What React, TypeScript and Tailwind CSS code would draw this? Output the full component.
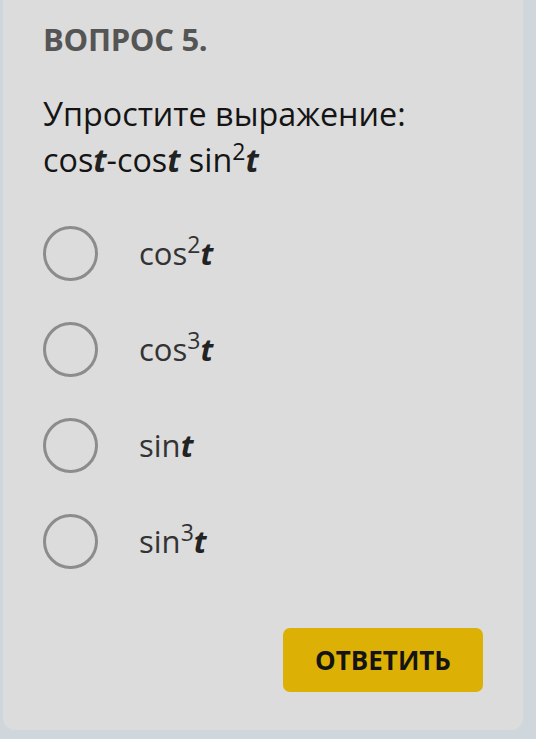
const options = [
  { base: 'cos', sup: '2' },
  { base: 'cos', sup: '3' },
  { base: 'sin', sup: '' },
  { base: 'sin', sup: '3' },
];

const T = () => <span className="font-bold italic text-[#222222]">t</span>;

export default function App() {
  return (
    <div
      className="w-[536px] h-[739px] bg-[#cfd7dc] pl-[3px] pr-[13px] pb-[9px] flex"
      style={{ fontFamily: '"Open Sans", "Liberation Sans", sans-serif' }}
    >
      <div className="flex-1 bg-[#dcdcdc] rounded-b-[12px] flex flex-col px-[40px] pt-[18px]">
        <div className="text-[31px] font-bold text-[#555555] leading-[42px] tracking-[-0.3px]">
          ВОПРОС 5.
        </div>

        <div className="mt-[30px] text-[32.3px] text-[#141414] leading-[46px]">
          <div>Упростите выражение:</div>
          <div>
            cos<T />-cos<T /> sin<sup className="text-[23px] -top-[12px]">2</sup><T />
          </div>
        </div>

        <div className="mt-[44px] flex flex-col gap-[41px]">
          {options.map((o, i) => (
            <div key={i} className="flex items-center h-[55px]">
              <div className="w-[55px] h-[55px] rounded-full border-[3px] border-[#8c8c8c] shrink-0" />
              <div className="ml-[41px] text-[31px] text-[#333333] leading-none">
                {o.base}
                {o.sup && <sup className="text-[23px] -top-[12px]">{o.sup}</sup>}
                <T />
              </div>
            </div>
          ))}
        </div>

        <div className="mt-auto mb-[38px] flex justify-end">
          <button className="w-[200px] h-[64px] rounded-[7px] bg-[#dcb004] text-[26px] font-bold text-[#141414]">
            ОТВЕТИТЬ
          </button>
        </div>
      </div>
    </div>
  );
}
